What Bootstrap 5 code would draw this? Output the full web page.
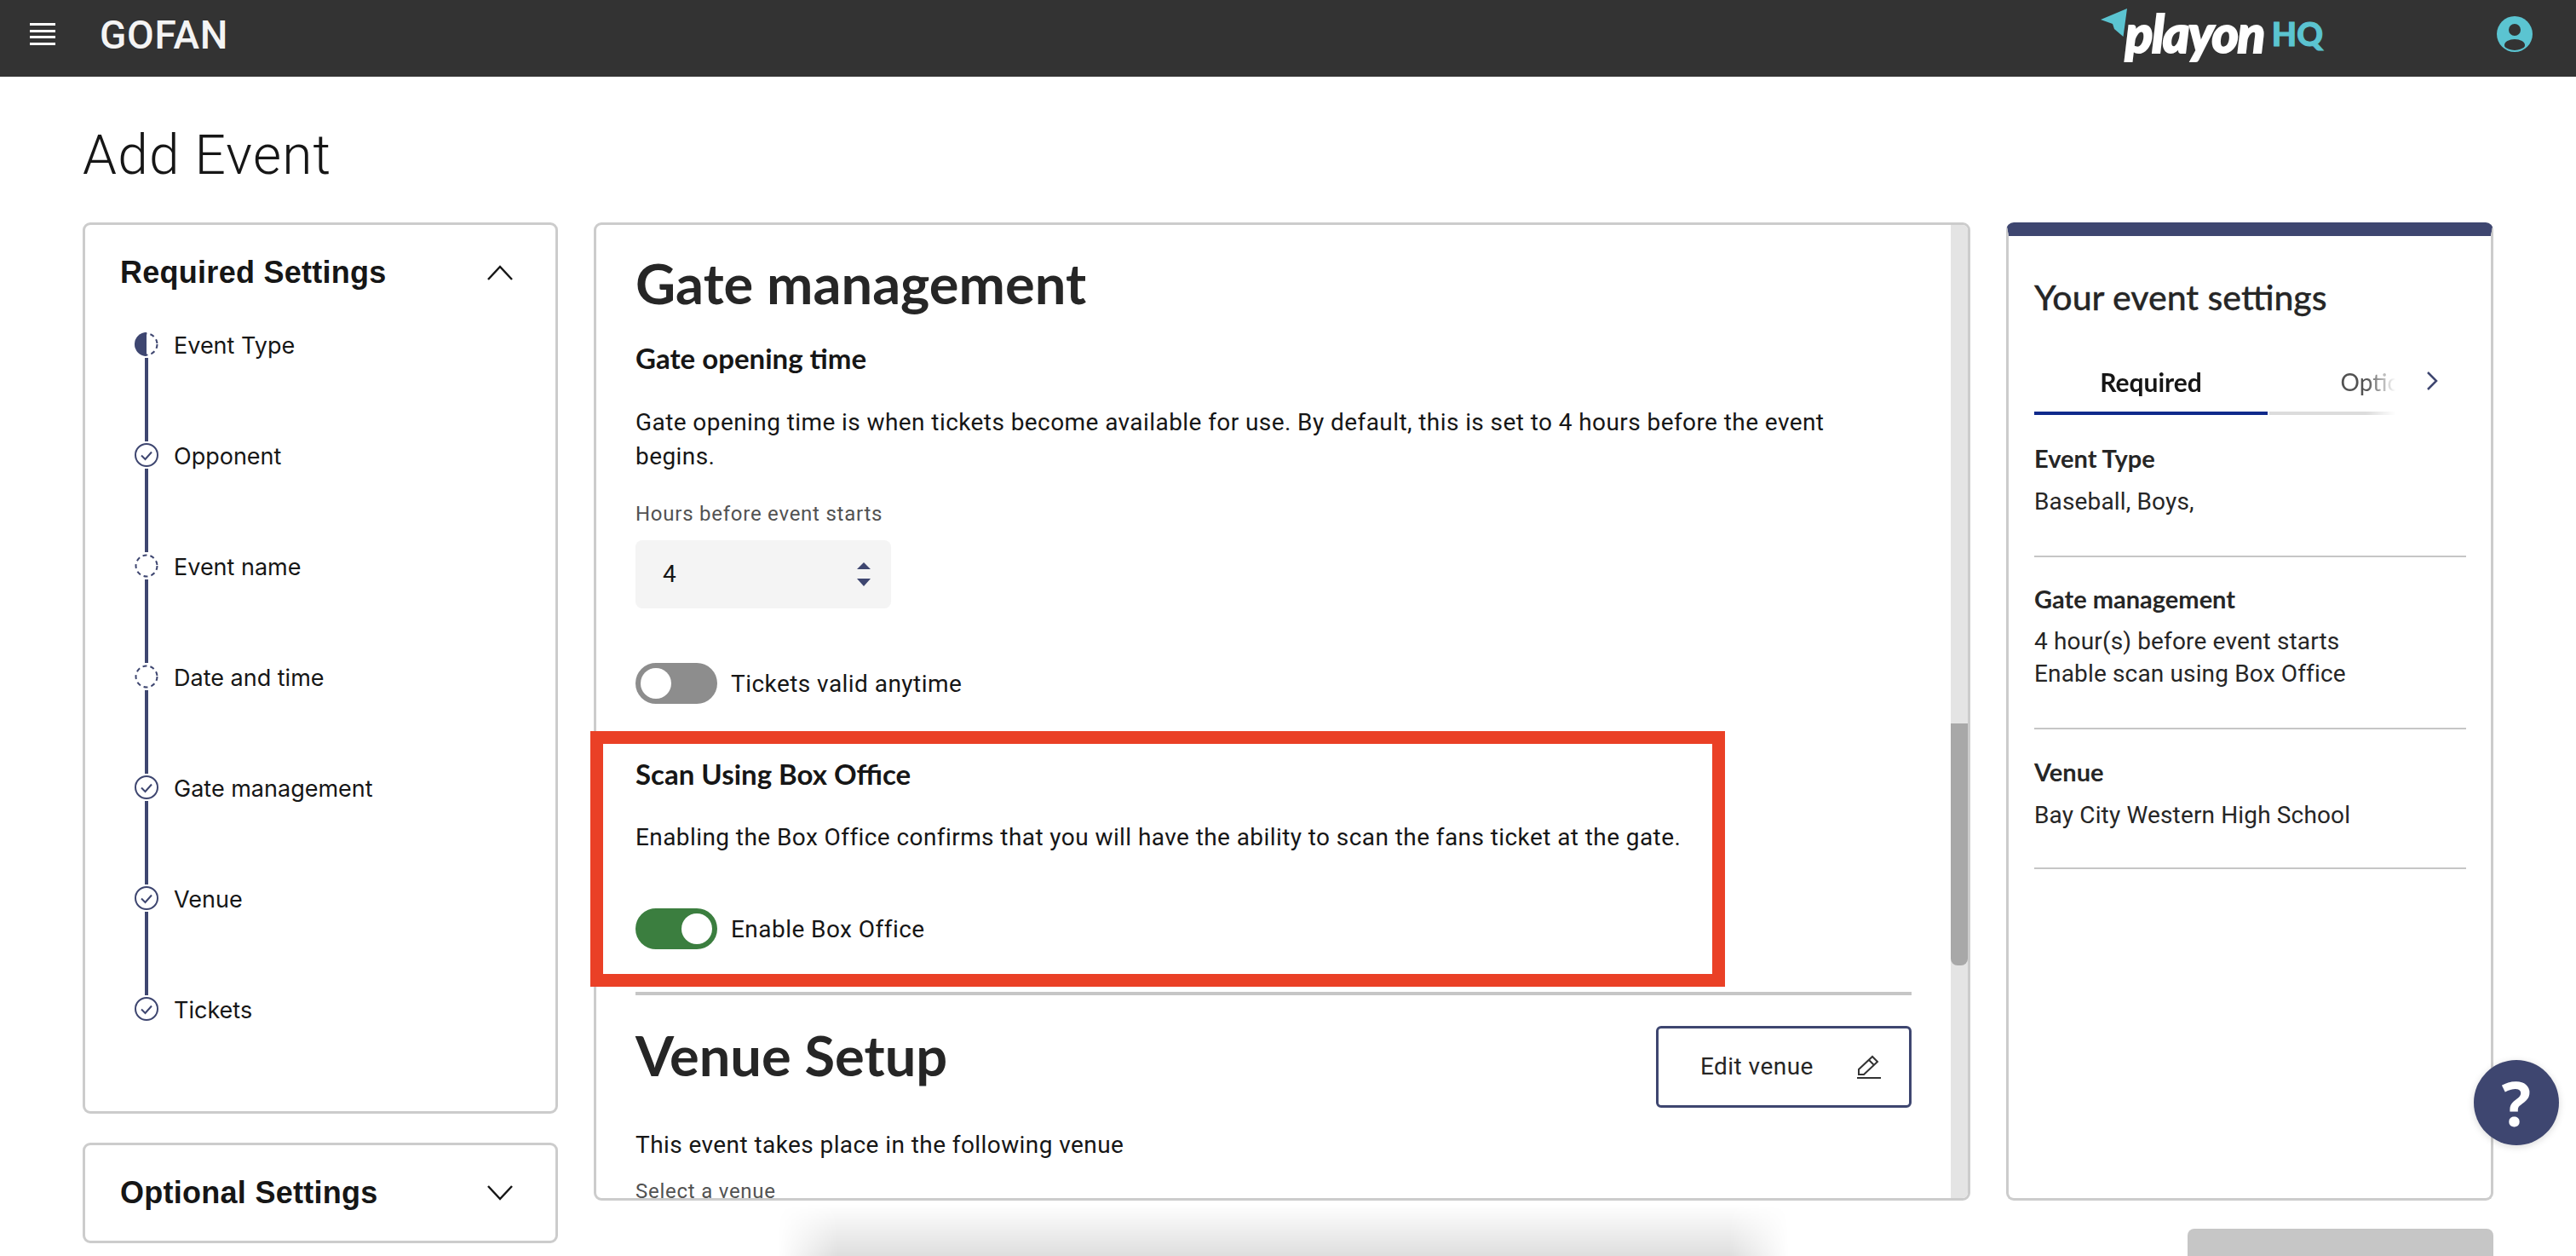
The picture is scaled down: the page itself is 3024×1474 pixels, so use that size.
<!DOCTYPE html>
<html lang="en">
<head>
    <meta charset="UTF-8">
    <title>GoFan - Add Event</title>
    <link href="https://cdn.jsdelivr.net/npm/bootstrap@5.3.0/dist/css/bootstrap.min.css" rel="stylesheet">
    <style>
        html, body { height: 100%; overflow: hidden; }
        body { font-family: Roboto, "Liberation Sans", sans-serif; color: #161616; background: #fff; position: relative; }

        .topbar { height: 90px; background: #333; padding-left: 35px; }
        .burger { width: 30px; height: 26px; margin-top: -10px; display: flex; flex-direction: column; justify-content: space-between; }
        .burger span { display: block; height: 3px; background: #fff; }
        .brand-name { margin: -8px 0 0 52px; font-size: 46px; font-weight: 500; letter-spacing: .7px; color: #f4f4f4; line-height: 1; }
        .logo-wrap { margin-left: auto; height: 90px; }
        .logo-arrow { margin-top: 10px; }
        .logo-text { font-family: Lato, sans-serif; font-style: italic; font-weight: 900; font-size: 60px; letter-spacing: -1.5px; color: #fff; -webkit-text-stroke: 2px #fff; line-height: 1; margin: -12px 0 0 -3px; }
        .logo-hq { font-family: Lato, sans-serif; font-weight: 900; font-size: 38px; color: #5bc4d1; -webkit-text-stroke: 1px #5bc4d1; line-height: 1; margin: -12px 0 0 9px; }
        .avatar { margin: -10px 51px 0 204px; }

        .page-wrap { padding: 0 97px; }
        .page-title { font-size: 64px; font-weight: 300; letter-spacing: 1.2px; line-height: 80px; margin: 53px 0 38px; color: #161616; }

        .panel-box { border: 3px solid #ccc; border-radius: 9px; background: #fff; }
        .left-col { width: 558px; flex: none; }
        .req-card { height: 1046px; padding: 33px 50px 0 41px; }
        .opt-card { height: 118px; margin-top: 34px; padding: 0 50px 0 41px; }
        .side-title { font-family: "Liberation Sans", sans-serif; font-weight: 700; font-size: 36px; letter-spacing: .27px; line-height: 46px; margin: 0; color: #161616; }
        .step-list { margin-top: 47px; padding-left: 17px; }
        .step-row { height: 130px; display: flex; }
        .step-rail { width: 28px; display: flex; flex-direction: column; align-items: center; flex: none; }
        .step-rail svg { flex: none; }
        .step-line { width: 4px; height: 98px; margin-top: 2px; background: #3e4670; }
        .step-label { margin-left: 18px; font-family: Inter, sans-serif; font-size: 27px; line-height: 32px; }

        .main-panel { width: 1616px; height: 1148px; margin-left: 42px; flex: none; overflow: hidden; }
        .main-scroll { flex: 1 1 auto; padding: 28px 46px 0 46px; overflow: hidden; }
        .track { width: 20px; flex: none; background: #e4e4e4; }
        .thumb { height: 284px; margin-top: 585px; background: #a8a8a8; border-radius: 0 0 8px 8px; }

        .big-head { font-family: Lato, sans-serif; font-weight: 700; font-size: 65px; line-height: 80px; margin: 0; color: #262626; }
        .venue-head { line-height: 68px; }
        .sub-head { font-family: Lato, sans-serif; font-weight: 700; font-size: 33px; line-height: 40px; margin: 0; color: #161616; }
        .body-copy { font-family: Roboto, sans-serif; font-size: 28px; line-height: 40px; margin: 0 0 -2px; padding-top: 2px; letter-spacing: .42px; }
        .copy-narrow { max-width: 1420px; }
        .mini-label { font-size: 24px; line-height: 32px; color: #525252; margin: 0; letter-spacing: .75px; }
        .num-field { width: 300px; height: 80px; background: #f4f4f4; border-radius: 8px; padding: 0 24px 0 32px; font-size: 28px; }
        .switch-row { height: 48px; }
        .switch-pill { width: 96px; height: 48px; border-radius: 24px; background: #8d8d8d; padding: 6px; flex: none; }
        .switch-pill.on { background: #3b7e3f; justify-content: flex-end; }
        .switch-knob { width: 36px; height: 36px; border-radius: 50%; background: #fff; }
        .switch-text { margin-left: 16px; padding-top: 2px; font-size: 28px; letter-spacing: .45px; line-height: 40px; }
        .rule-thick { height: 4px; background: #c6c6c6; margin-top: 50px; }
        .edit-btn { width: 300px; height: 96px; border: 3px solid #3e4670; border-radius: 6px; background: #fff; padding: 0 33px 0 49px; font-size: 28px; letter-spacing: .45px; color: #262626; }

        /* vertical rhythm of the gate form */
        .gap-15 { margin-top: 15px; }
        .gap-20 { margin-top: 20px; }
        .gap-22 { margin-top: 22px; }
        .gap-28 { margin-top: 28px; }
        .gap-33 { margin-top: 33px; }
        .gap-34 { margin-top: 34px; }
        .gap-36 { margin-top: 36px; }
        .gap-62 { margin-top: 62px; }
        .gap-64 { margin-top: 64px; }
        .gap-65 { margin-top: 65px; }

        .summary-card { width: 572px; height: 1148px; margin-left: 42px; flex: none; border-top: 16px solid #3e4670; padding: 46px 29px 0 30px; }
        .summary-title { font-family: Lato, sans-serif; font-size: 41px; font-weight: 500; line-height: 52px; margin: 0; color: #262626; -webkit-text-stroke: .3px #262626; }
        .tab-row { margin-top: 40px; }
        .tab-view { width: 424px; overflow: hidden; -webkit-mask-image: linear-gradient(to right, #000 390px, transparent 424px); mask-image: linear-gradient(to right, #000 390px, transparent 424px); }
        .tab-item { width: 274px; flex: none; margin-right: 2px; height: 72px; line-height: 66px; text-align: center; font-size: 28px; font-family: Lato, sans-serif; color: #525252; border-bottom: 4px solid #dcdcdc; }
        .tab-item.current { font-weight: 700; font-size: 30px; color: #161616; border-bottom-color: #102a8b; }
        .tab-next { margin-left: 36px; margin-top: -8px; }
        .sum-label { font-family: Lato, sans-serif; font-weight: 700; font-size: 29px; line-height: 40px; color: #262626; margin: 30px 0 0; }
        .sum-label.first { margin-top: 31px; }
        .sum-label.tight { margin-top: 29px; }
        .sum-value { font-size: 28px; line-height: 38px; margin: 12px 0 0; letter-spacing: .15px; color: #262626; }
        .sum-value.close { margin-top: 11px; }
        .sum-rule { height: 2px; background: #c6c6c6; margin-top: 44px; }
        .sum-rule.last { margin-top: 42px; }

        .next-btn { width: 359px; height: 33px; margin: 33px 0 0 auto; background: #c6c6c6; border-radius: 8px 8px 0 0; }

        /* things that float over the page */
        .callout { position: absolute; left: 693px; top: 858px; width: 1332px; height: 300px; border: 15px solid #ea4026; pointer-events: none; }
        .help-fab { position: absolute; left: 2904px; top: 1244px; width: 100px; height: 100px; border-radius: 50%; background: #3e4670; color: #fff; font-family: "Open Sans", sans-serif; font-weight: 700; font-size: 72px; line-height: 1; box-shadow: 0 2px 8px rgba(0,0,0,.15); }
        .foot-shadow { position: absolute; left: 913px; bottom: 0; width: 1187px; height: 61px; background: linear-gradient(to top, rgba(0,0,0,.13), transparent); -webkit-mask-image: linear-gradient(to right, transparent, #000 70px, #000 calc(100% - 70px), transparent); mask-image: linear-gradient(to right, transparent, #000 70px, #000 calc(100% - 70px), transparent); }
    </style>
</head>
<body>
    <header class="topbar d-flex align-items-center">
        <div class="burger"><span></span><span></span><span></span><span></span></div>
        <div class="brand-name">GOFAN</div>
        <div class="logo-wrap d-flex align-items-center">
            <svg class="logo-arrow align-self-start" width="32" height="34" viewBox="0 0 32 34"><path d="M31 0 L0 13 L14 18 L16 24 L26.5 33 Z" fill="#5bc4d1"/></svg>
            <span class="logo-text">playon</span>
            <span class="logo-hq">HQ</span>
        </div>
        <svg class="avatar" width="42" height="42" viewBox="0 0 42 42">
            <defs><clipPath id="avatarClip"><circle cx="21" cy="21" r="19"/></clipPath></defs>
            <circle cx="21" cy="21" r="21" fill="#5bc4d1"/>
            <circle cx="21" cy="16" r="7" fill="#333"/>
            <ellipse cx="21" cy="34" rx="12" ry="7" fill="#333" clip-path="url(#avatarClip)"/>
        </svg>
    </header>

    <main class="page-wrap">
        <h1 class="page-title">Add Event</h1>
        <div class="d-flex align-items-start">
            <div class="left-col">
                <section class="panel-box req-card">
                    <div class="d-flex justify-content-between align-items-center">
                        <h2 class="side-title">Required Settings</h2>
                        <svg width="30" height="18" viewBox="0 0 30 18"><path d="M1 17 L15 2 L29 17" fill="none" stroke="#161616" stroke-width="2.5"/></svg>
                    </div>
                    <div class="step-list" id="steps"></div>
                </section>
                <section class="panel-box opt-card d-flex justify-content-between align-items-center">
                    <h2 class="side-title">Optional Settings</h2>
                    <svg width="30" height="18" viewBox="0 0 30 18"><path d="M1 1 L15 16 L29 1" fill="none" stroke="#161616" stroke-width="2.5"/></svg>
                </section>
            </div>

            <section class="panel-box main-panel d-flex">
                <div class="main-scroll">
                    <h2 class="big-head">Gate management</h2>
                    <h3 class="sub-head gap-28">Gate opening time</h3>
                    <p class="body-copy copy-narrow gap-34">Gate opening time is when tickets become available for use. By default, this is set to 4 hours before the event begins.</p>
                    <p class="mini-label gap-33">Hours before event starts</p>
                    <div class="num-field d-flex align-items-center justify-content-between gap-15">
                        <span>4</span>
                        <svg width="16" height="28" viewBox="0 0 16 28"><path d="M8 0 L16 8 H0 Z M0 19 H16 L8 28 Z" fill="#3e4670"/></svg>
                    </div>
                    <div class="switch-row d-flex align-items-center gap-64">
                        <div class="switch-pill d-flex"><div class="switch-knob"></div></div>
                        <span class="switch-text">Tickets valid anytime</span>
                    </div>
                    <h3 class="sub-head gap-62">Scan Using Box Office</h3>
                    <p class="body-copy gap-33">Enabling the Box Office confirms that you will have the ability to scan the fans ticket at the gate.</p>
                    <div class="switch-row d-flex align-items-center gap-65">
                        <div class="switch-pill on d-flex"><div class="switch-knob"></div></div>
                        <span class="switch-text">Enable Box Office</span>
                    </div>
                    <div class="rule-thick"></div>
                    <div class="d-flex justify-content-between align-items-start gap-36">
                        <h2 class="big-head venue-head">Venue Setup</h2>
                        <button type="button" class="btn edit-btn d-flex align-items-center justify-content-between">
                            <span>Edit venue</span>
                            <svg width="28" height="28" viewBox="0 0 28 28"><path d="M2 23 V17 L18 2 L24 8 L8 23 Z M14 6 L20 12 M0 27 H28" fill="none" stroke="#333" stroke-width="2"/></svg>
                        </button>
                    </div>
                    <p class="body-copy gap-22">This event takes place in the following venue</p>
                    <p class="mini-label gap-20">Select a venue</p>
                </div>
                <div class="track"><div class="thumb"></div></div>
            </section>

            <div>
                <section class="panel-box summary-card">
                    <h2 class="summary-title">Your event settings</h2>
                    <div class="tab-row d-flex align-items-center">
                        <div class="tab-view d-flex">
                            <div class="tab-item current">Required</div>
                            <div class="tab-item">Optional</div>
                        </div>
                        <svg class="tab-next" width="14" height="22" viewBox="0 0 14 22"><path d="M2 1 L12 11 L2 21" fill="none" stroke="#3e4670" stroke-width="2.5"/></svg>
                    </div>
                    <p class="sum-label first">Event Type</p>
                    <p class="sum-value">Baseball, Boys,</p>
                    <div class="sum-rule"></div>
                    <p class="sum-label tight">Gate management</p>
                    <p class="sum-value close">4 hour(s) before event starts<br>Enable scan using Box Office</p>
                    <div class="sum-rule"></div>
                    <p class="sum-label">Venue</p>
                    <p class="sum-value">Bay City Western High School</p>
                    <div class="sum-rule last"></div>
                </section>
                <div class="next-btn"></div>
            </div>
        </div>
    </main>

    <div class="foot-shadow"></div>
    <div class="callout"></div>
    <div class="help-fab d-flex align-items-center justify-content-center">?</div>

    <script>
        var steps = [
            ['Event Type', 'half'], ['Opponent', 'done'], ['Event name', 'todo'], ['Date and time', 'todo'],
            ['Gate management', 'done'], ['Venue', 'done'], ['Tickets', 'done']
        ];
        var icons = {
            half: '<circle cx="14" cy="14" r="12.5" fill="none" stroke="#3e4670" stroke-width="2" stroke-dasharray="5 4"/><path d="M14 0 A14 14 0 0 0 14 28 Z" fill="#3e4670"/>',
            done: '<circle cx="14" cy="14" r="13" fill="none" stroke="#3e4670" stroke-width="2"/><path d="M8 14.5 L12.5 19 L20 10.5" fill="none" stroke="#3e4670" stroke-width="2"/>',
            todo: '<circle cx="14" cy="14" r="12.5" fill="none" stroke="#3e4670" stroke-width="2" stroke-dasharray="5 4"/>'
        };
        document.getElementById('steps').innerHTML = steps.map(function (s, i) {
            var line = i < steps.length - 1 ? '<div class="step-line"></div>' : '';
            return '<div class="step-row"><div class="step-rail"><svg width="28" height="28" viewBox="0 0 28 28">' + icons[s[1]] + '</svg>' + line + '</div><span class="step-label">' + s[0] + '</span></div>';
        }).join('');
    </script>
    <script src="https://cdn.jsdelivr.net/npm/bootstrap@5.3.0/dist/js/bootstrap.bundle.min.js"></script>
</body>
</html>
